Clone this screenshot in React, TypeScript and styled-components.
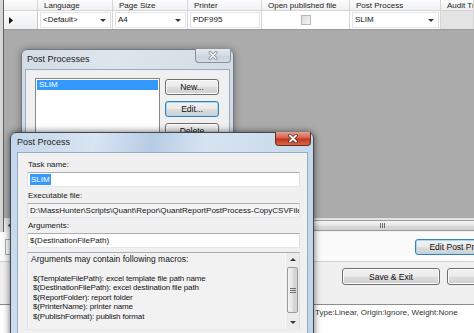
import styled, { createGlobalStyle } from 'styled-components';

const GlobalStyle = createGlobalStyle`
  html, body { margin: 0; padding: 0; }
  body {
    font-family: 'Liberation Sans', Arial, sans-serif;
    font-size: 8px;
    color: #151515;
  }
`;

const Screen = styled.div`
  position: relative;
  width: 474px;
  height: 333px;
  overflow: hidden;
  display: flex;
  flex-direction: column;
  background: #fff;
`;

const Upper = styled.div`
  height: 232px;
  display: flex;
  padding-left: 3px;
  background: #d6d6d6;
`;

const UpperInner = styled.div`
  flex: 1;
  min-width: 0;
  display: flex;
  flex-direction: column;
  border-left: 1px solid #5f5f5f;
`;

const Grid = styled.div`
  display: grid;
  grid-template-columns: 34px 75px 75px 74px 88px 91px 1fr;
  grid-template-rows: 11px 18px;
  background: #fff;
  border-bottom: 1px solid #9a9a9a;
`;

const HeadCell = styled.div`
  padding-left: 6px;
  line-height: 11px;
  white-space: nowrap;
  overflow: hidden;
  background: linear-gradient(#fdfdfd, #eff0f2);
  border-right: 1px solid #d5d5d5;
  border-bottom: 1px solid #d5d5d5;
  color: #222;
`;

const RowHead = styled.div`
  display: flex;
  align-items: center;
  padding-left: 5px;
  background: linear-gradient(#fbfbfb, #eeeff1);
  border-right: 1px solid #c9c9c9;
`;

const Cell = styled.div<{ $bg?: string }>`
  display: flex;
  align-items: center;
  padding: 2px 1px 2px 2px;
  background: ${(p) => p.$bg || '#fff'};
  border-right: 1px solid #d6d6d6;
`;

const Combo = styled.div`
  flex: 1;
  height: 100%;
  display: flex;
  align-items: center;
  justify-content: space-between;
  padding: 0 4px 0 2px;
  border: 1px solid #e2e3ea;
  line-height: 12px;
`;

const CheckCell = styled(Cell)`
  justify-content: center;
`;

const CheckBox = styled.div`
  width: 8px;
  height: 8px;
  border: 1px solid #b7b7b7;
  background: linear-gradient(135deg, #dcdcdc, #f4f4f4);
`;

const Workspace = styled.div`
  flex: 1;
  background: #ababab;
`;

const HScroll = styled.div`
  height: 13px;
  display: flex;
  align-items: stretch;
  background: linear-gradient(#e6e6e6, #f3f3f3);
  border-top: 1px solid #e0e0e0;
  overflow: hidden;
`;

const ScrollArrow = styled.div`
  width: 12px;
  display: flex;
  align-items: center;
  justify-content: center;
  flex: none;
`;

const HThumb = styled.div`
  flex: 0 0 732px;
  margin: 1px 0;
  display: flex;
  align-items: center;
  justify-content: center;
  border: 1px solid #9c9c9c;
  border-radius: 2px;
  background: linear-gradient(#f5f5f5, #e6e6e6 50%, #d9d9d9 51%, #d2d2d2);
`;

const SectionA = styled.div`
  height: 29px;
  display: flex;
  align-items: center;
  padding-left: 5px;
  background: #fbfbfb;
  border-bottom: 1px solid #cfcfcf;
`;

const SideField = styled.div`
  width: 300px;
  height: 14px;
  border: 1px solid #abadb3;
  background: #fff;
`;

const WinButton = styled.div<{ $w: number; $focus?: boolean }>`
  flex: none;
  width: ${(p) => p.$w}px;
  height: 16px;
  display: flex;
  align-items: center;
  justify-content: center;
  box-sizing: border-box;
  border: 1px solid ${(p) => (p.$focus ? '#3c7fb1' : '#707070')};
  border-radius: 3px;
  background: linear-gradient(#f2f2f2, #ebebeb 48%, #dddddd 52%, #cfcfcf);
  box-shadow: ${(p) => (p.$focus ? 'inset 0 0 0 1px #a6d8f5' : 'inset 0 0 0 1px #fcfcfc')};
  font-size: 8.5px;
  color: #111;
  white-space: nowrap;
`;

const EditButton = styled(WinButton)`
  margin-left: auto;
  margin-right: -37px;
  margin-top: 1px;
`;

const SectionB = styled.div`
  height: 43px;
  display: flex;
  align-items: flex-start;
  gap: 7px;
  padding: 6px 0 0 342px;
  box-sizing: border-box;
  background: #f0f0f0;
  border-bottom: 1px solid #8c8c8c;
`;

const BigButton = styled(WinButton)`
  height: 17px;
`;

const Status = styled.div`
  flex: 1;
  padding: 3px 0 0 315px;
  line-height: 9px;
  white-space: nowrap;
  color: #333;
  background: #fff;
`;

/* ---------- dialogs ---------- */

const Window = styled.div<{ $active?: boolean }>`
  position: absolute;
  display: flex;
  flex-direction: column;
  box-sizing: border-box;
  border: 1px solid ${(p) => (p.$active ? '#3f4a57' : '#6f7b88')};
  border-radius: 6px 6px 0 0;
  background: ${(p) =>
    p.$active
      ? 'linear-gradient(100deg, #c3d6ea 0%, #d8e5f2 25%, #b6cce4 42%, #d6e4f1 58%, #c0d4e9 100%)'
      : 'linear-gradient(100deg, #d3dbe4 0%, #dfe5ec 40%, #d2dae3 100%)'};
  box-shadow: 0 0 7px rgba(0, 0, 0, ${(p) => (p.$active ? 0.6 : 0.35)});
`;

const TitleBar = styled.div<{ $pad: number }>`
  position: relative;
  height: 19px;
  flex: none;
  display: flex;
  align-items: center;
  padding-left: ${(p) => p.$pad}px;
  padding-bottom: 1px;
  box-sizing: border-box;
  font-size: 9px;
  color: #1b1b1b;
`;

const CloseBtn = styled.div<{ $active?: boolean }>`
  position: absolute;
  top: -1px;
  right: 2px;
  width: 34px;
  height: 13px;
  display: flex;
  align-items: center;
  justify-content: center;
  border: 1px solid ${(p) => (p.$active ? '#6a2a22' : '#8592a1')};
  border-top: none;
  border-radius: 0 0 4px 4px;
  background: ${(p) =>
    p.$active
      ? 'linear-gradient(#e8a08f, #d2624d 45%, #c1361f 55%, #d8664c)'
      : 'linear-gradient(#e4e9ef, #d3dae2 50%, #c9d1da 51%, #d6dde5)'};
`;

const Client = styled.div<{ $ml: number; $mr: number }>`
  flex: 1;
  margin: 0 ${(p) => p.$mr}px 0 ${(p) => p.$ml}px;
  border: 1px solid #98abc0;
  border-bottom: none;
  background: #f0f0f0;
`;

const ListClient = styled(Client)`
  display: flex;
  gap: 5px;
  padding: 8px 0 0 9px;
`;

const ListBox = styled.div`
  width: 125px;
  height: 68px;
  box-sizing: border-box;
  border: 1px solid #828790;
  background: #fff;
  padding: 1px;
`;

const ListItem = styled.div<{ $selected?: boolean }>`
  height: 10px;
  line-height: 10px;
  padding-left: 2px;
  background: ${(p) => (p.$selected ? '#3399ff' : 'transparent')};
  color: ${(p) => (p.$selected ? '#fff' : '#222')};
`;

const ButtonColumn = styled.div`
  display: flex;
  flex-direction: column;
  gap: 6px;
  margin-top: 1px;
`;

const FormClient = styled(Client)`
  display: flex;
  flex-direction: column;
  padding: 6px 0 0 9px;
`;

const Label = styled.div<{ $mt: number }>`
  height: 12px;
  line-height: 12px;
  margin-top: ${(p) => p.$mt}px;
  padding-left: 1px;
`;

const Field = styled.div<{ $readonly?: boolean }>`
  width: 273px;
  height: 15px;
  box-sizing: border-box;
  display: flex;
  align-items: center;
  padding-left: 2px;
  border: 1px solid;
  border-color: #abadb3 #dbdfe6 #e3e9ef #e2e3ea;
  background: ${(p) => (p.$readonly ? '#f4f4f4' : '#fff')};
  white-space: nowrap;
  overflow: hidden;
  margin-top: 1px;
`;

const Selected = styled.span`
  background: #3399ff;
  color: #fff;
  padding: 1px 1px;
`;

const InfoBox = styled.div`
  position: relative;
  width: 273px;
  height: 78px;
  margin-top: 4px;
  box-sizing: border-box;
  border: 1px solid;
  border-color: #abadb3 #dbdfe6 #e3e9ef #e2e3ea;
  background: #f2f2f2;
  display: flex;
`;

const InfoText = styled.div`
  flex: 1;
  padding: 2px 0 0 3px;
  line-height: 9.5px;
  white-space: nowrap;
`;

const Intro = styled.div`
  font-size: 8.5px;
  margin-bottom: 9px;
`;

const Macro = styled.div`
  padding-left: 2px;
  letter-spacing: -0.15px;
`;

const VScroll = styled.div`
  width: 13px;
  display: flex;
  flex-direction: column;
  align-items: center;
  background: #ececec;
  border-left: 1px solid #f8f8f8;
`;

const VArrow = styled.div`
  height: 13px;
  display: flex;
  align-items: center;
  justify-content: center;
`;

const VThumb = styled.div`
  width: 9px;
  height: 44px;
  margin-top: 1px;
  display: flex;
  align-items: center;
  justify-content: center;
  border: 1px solid #9c9c9c;
  border-radius: 2px;
  background: linear-gradient(90deg, #f5f5f5, #e4e4e4 50%, #d8d8d8 51%, #d3d3d3);
`;

const VSpacer = styled.div`
  flex: 1;
`;

const Tri = ({ dir }: { dir: 'down' | 'right' | 'left' | 'up' }) => {
  const pts = {
    down: '0,0 6,0 3,3',
    up: '0,3 6,3 3,0',
    right: '0,0 4,3.5 0,7',
    left: '4,0 0,3.5 4,7',
  }[dir];
  const w = dir === 'down' || dir === 'up' ? 6 : 4;
  const h = dir === 'down' || dir === 'up' ? 3 : 7;
  return (
    <svg width={w} height={h} viewBox={`0 0 ${w} ${h}`}>
      <polygon points={pts} fill={dir === 'right' ? '#111' : '#3a3a3a'} />
    </svg>
  );
};

const XGlyph = ({ active }: { active?: boolean }) => (
  <svg width="10" height="9" viewBox="0 0 10 9">
    <path
      d="M2 1.5 L8 7.5 M8 1.5 L2 7.5"
      stroke={active ? '#5a1a10' : '#7c8795'}
      strokeWidth={active ? 3.4 : 3}
      strokeLinecap="round"
    />
    <path
      d="M2 1.5 L8 7.5 M8 1.5 L2 7.5"
      stroke={active ? '#ffffff' : '#f4f6f8'}
      strokeWidth={active ? 2 : 1.6}
      strokeLinecap="round"
    />
  </svg>
);

const Grip = ({ vertical }: { vertical?: boolean }) => (
  <svg width="6" height="5" viewBox="0 0 6 5">
    {vertical ? (
      <path d="M0 0.5 H6 M0 2.5 H6 M0 4.5 H6" stroke="#6f6f6f" strokeWidth="1" />
    ) : (
      <path d="M0.5 0 V5 M2.5 0 V5 M4.5 0 V5" stroke="#6f6f6f" strokeWidth="1" />
    )}
  </svg>
);

const macros = [
  '$(TemplateFilePath): excel template file path name',
  '$(DestinationFilePath): excel destination file path',
  '$(ReportFolder): report folder',
  '$(PrinterName): printer name',
  '$(PublishFormat): publish format',
];

export default function App() {
  return (
    <Screen>
      <GlobalStyle />
      <Upper>
        <UpperInner>
          <Grid>
            <HeadCell />
            <HeadCell>Language</HeadCell>
            <HeadCell>Page Size</HeadCell>
            <HeadCell>Printer</HeadCell>
            <HeadCell>Open published file</HeadCell>
            <HeadCell>Post Process</HeadCell>
            <HeadCell>Audit Trail</HeadCell>

            <RowHead>
              <Tri dir="right" />
            </RowHead>
            <Cell>
              <Combo>
                &lt;Default&gt;
                <Tri dir="down" />
              </Combo>
            </Cell>
            <Cell>
              <Combo>
                A4
                <Tri dir="down" />
              </Combo>
            </Cell>
            <Cell>
              <Combo>PDF995</Combo>
            </Cell>
            <CheckCell>
              <CheckBox />
            </CheckCell>
            <Cell>
              <Combo>
                SLIM
                <Tri dir="down" />
              </Combo>
            </Cell>
            <Cell $bg="#e4e4e4" />
          </Grid>
          <Workspace />
          <HScroll>
            <ScrollArrow>
              <Tri dir="left" />
            </ScrollArrow>
            <HThumb>
              <Grip />
            </HThumb>
          </HScroll>
        </UpperInner>
      </Upper>

      <SectionA>
        <SideField />
        <EditButton $w={96} $focus>
          Edit Post Process
        </EditButton>
      </SectionA>
      <SectionB>
        <BigButton $w={98}>Save &amp; Exit</BigButton>
        <BigButton $w={98}>Cancel</BigButton>
      </SectionB>
      <Status>Type:Linear, Origin:Ignore, Weight:None</Status>

      <Window style={{ left: 21, top: 49, width: 213, height: 120 }}>
        <TitleBar $pad={5}>
          Post Processes
          <CloseBtn>
            <XGlyph />
          </CloseBtn>
        </TitleBar>
        <ListClient $ml={3} $mr={3}>
          <ListBox>
            <ListItem $selected>SLIM</ListItem>
          </ListBox>
          <ButtonColumn>
            <WinButton $w={54}>New...</WinButton>
            <WinButton $w={54} $focus>
              Edit...
            </WinButton>
            <WinButton $w={54}>Delete</WinButton>
          </ButtonColumn>
        </ListClient>
      </Window>

      <Window $active style={{ left: 10, top: 132, width: 304, height: 215 }}>
        <TitleBar $pad={6}>
          Post Process
          <CloseBtn $active>
            <XGlyph active />
          </CloseBtn>
        </TitleBar>
        <FormClient $ml={6} $mr={5}>
          <Label $mt={0}>Task name:</Label>
          <Field>
            <Selected>SLIM</Selected>
          </Field>
          <Label $mt={3}>Executable file:</Label>
          <Field $readonly>
            D:\MassHunter\Scripts\Quant\Repor\QuantReportPostProcess-CopyCSVFile.exe
          </Field>
          <Label $mt={2}>Arguments:</Label>
          <Field>$(DestinationFilePath)</Field>
          <InfoBox>
            <InfoText>
              <Intro>Arguments may contain following macros:</Intro>
              {macros.map((m) => (
                <Macro key={m}>{m}</Macro>
              ))}
            </InfoText>
            <VScroll>
              <VArrow>
                <Tri dir="up" />
              </VArrow>
              <VThumb>
                <Grip vertical />
              </VThumb>
              <VSpacer />
              <VArrow>
                <Tri dir="down" />
              </VArrow>
            </VScroll>
          </InfoBox>
        </FormClient>
      </Window>
    </Screen>
  );
}
